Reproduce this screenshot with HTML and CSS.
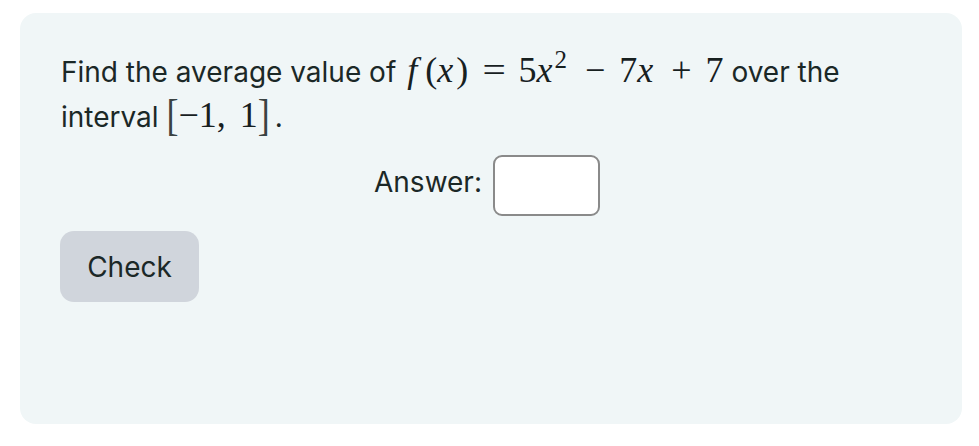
FILE: index.html
```html
<!DOCTYPE html>
<html lang="en">
<head>
  <meta charset="UTF-8" />
  <title>Average value</title>
  <link rel="stylesheet" href="styles.css">
</head>
<body>
  <div class="card">
    <p class="question">
      Find the average value of
      <span class="math"><i class="fn">f</i>(<i class="arg">x</i>)<span class="rel">=</span>5<i>x</i><sup>2</sup><span class="bin">−</span>7<i>x</i><span class="bin">+</span>7</span>
      over the<br>
      interval
      <span class="math"><span class="big">[</span>−1,<span class="thin"></span>1<span class="big">]</span></span><span class="dot">.</span>
    </p>
    <div class="answer-row">
      <label for="answer">Answer:</label>
      <input id="answer" type="text">
    </div>
    <button class="check">Check</button>
  </div>
</body>
</html>
```
FILE: styles.css
```css
body {
  margin: 0;
  background: #fff;
  font-family: Inter, "Noto Sans", sans-serif;
  color: #1b2827;
}

/* card */
.card {
  margin: 13px 17px 0 20px;
  height: 411px;
  box-sizing: border-box;
  padding: 37px 41px;
  background: #f0f6f7;
  border-radius: 16px;
}

/* question text */
.question {
  margin: 0;
  font-size: 28px;
  line-height: 45px;
}

.math {
  font-family: "Liberation Serif", "DejaVu Serif", serif;
  font-size: 36px;
  line-height: 0;
  white-space: nowrap;
  color: #17201f;
}
.math i {
  font-style: italic;
}
.math .fn {
  margin: 0 8px 0 3px;
}
.math .arg {
  margin-right: 3px;
}
.math sup {
  font-size: 25px;
  line-height: 0;
  margin-left: 2px;
  vertical-align: 14px;
}
.math .rel {
  display: inline-block;
  margin: 0 14px 0 16px;
  transform: scaleX(1.15);
}
.math .bin {
  margin: 0 14px 0 18px;
}
.math .big {
  display: inline-block;
  color: #3a4242;
  transform: scaleY(1.25);
}
.math .thin {
  display: inline-block;
  width: 14px;
}
.dot {
  margin-left: 5px;
}

/* answer */
.answer-row {
  display: flex;
  justify-content: center;
  align-items: center;
  gap: 11px;
  margin-top: 15px;
  padding-right: 8px;
  font-size: 28px;
}
.answer-row label {
  margin-bottom: 7px;
}
.answer-row input {
  width: 107px;
  height: 61px;
  box-sizing: border-box;
  border: 2px solid #8a8a8a;
  border-radius: 9px;
  background: #fff;
}

/* check button */
.check {
  display: block;
  margin: 15px 0 0 -1px;
  width: 139px;
  height: 71px;
  border: none;
  border-radius: 14px;
  background: #d0d5dc;
  font-family: Inter, "Noto Sans", sans-serif;
  font-size: 28px;
  color: #1b2827;
}
```
